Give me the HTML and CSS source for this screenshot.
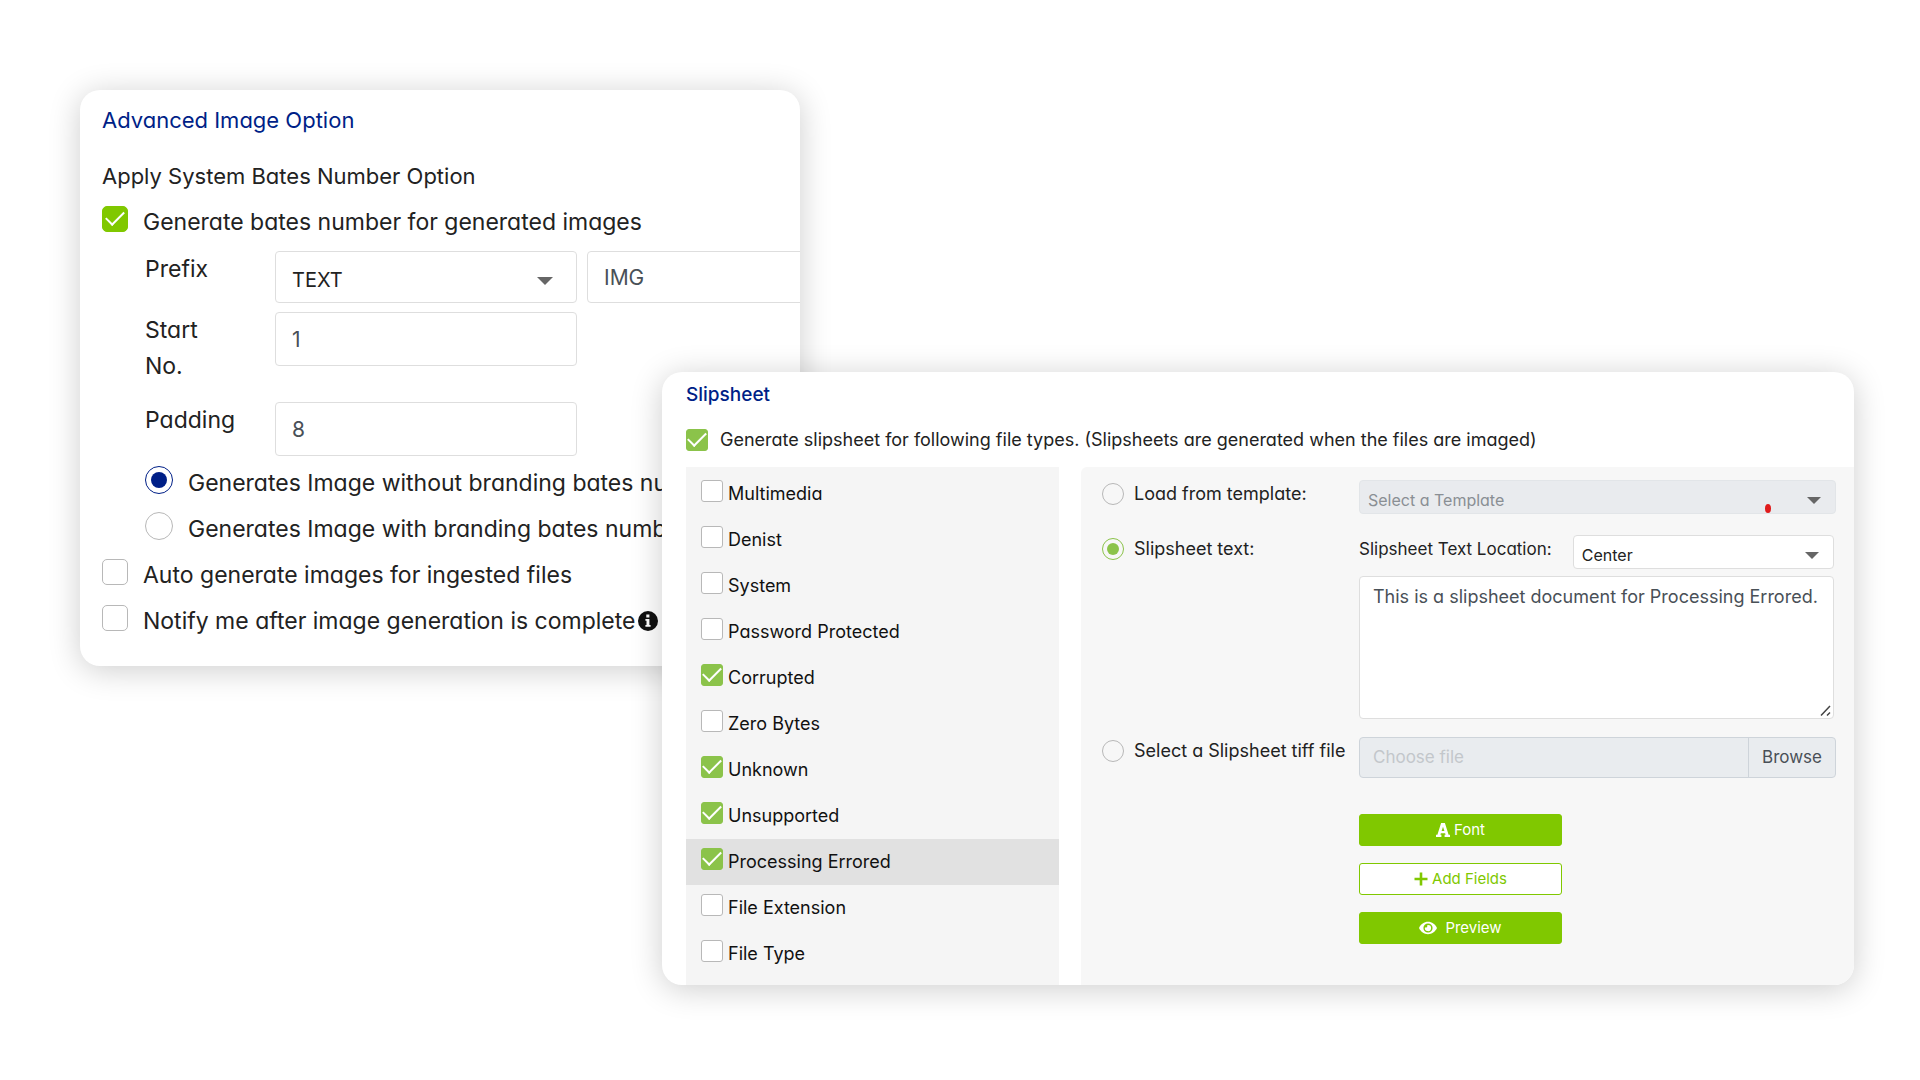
FILE: index.html
```
<!DOCTYPE html>
<html lang="en">
<head>
    <meta charset="UTF-8">
    <meta name="viewport" content="width=device-width, initial-scale=1.0">
    <title>Image Options</title>
    <link rel="stylesheet" href="styles.css">
</head>
<body>
    <main class="stage">
        <section class="card image-card">
            <h2>Advanced Image Option</h2>
            <h3>Apply System Bates Number Option</h3>
            <label class="option"><input type="checkbox" checked> Generate bates number for generated images</label>

            <div class="bates">
                <div class="field">
                    <label for="prefix">Prefix</label>
                    <div class="select-wrap">
                        <select id="prefix"><option>TEXT</option></select>
                    </div>
                    <input class="prefix-text" type="text" value="IMG" aria-label="Prefix text">
                </div>
                <div class="field">
                    <label for="start">Start No.</label>
                    <input id="start" type="text" value="1">
                </div>
                <div class="field padding-field">
                    <label for="padding">Padding</label>
                    <input id="padding" type="text" value="8">
                </div>
                <label class="option"><input type="radio" name="branding" checked> Generates Image without branding bates number</label>
                <label class="option"><input type="radio" name="branding"> Generates Image with branding bates number</label>
            </div>

            <label class="option"><input type="checkbox"> Auto generate images for ingested files</label>
            <label class="option"><input type="checkbox"> Notify me after image generation is complete
                <svg class="info" viewBox="0 0 20 20"><circle cx="10" cy="10" r="10"/><path fill="#fff" d="M8.3 3.6h3.1v2.9H8.3zM7.4 8h4v6h1.2v1.8H7.4V14h1.1V9.8H7.4z"/></svg>
            </label>
        </section>

        <section class="card slip-card">
            <h2>Slipsheet</h2>
            <label class="generate"><input type="checkbox" checked> Generate slipsheet for following file types. (Slipsheets are generated when the files are imaged)</label>

            <div class="slip-body">
                <ul class="types">
                    <li><label><input type="checkbox"> Multimedia</label></li>
                    <li><label><input type="checkbox"> Denist</label></li>
                    <li><label><input type="checkbox"> System</label></li>
                    <li><label><input type="checkbox"> Password Protected</label></li>
                    <li><label><input type="checkbox" checked> Corrupted</label></li>
                    <li><label><input type="checkbox"> Zero Bytes</label></li>
                    <li><label><input type="checkbox" checked> Unknown</label></li>
                    <li><label><input type="checkbox" checked> Unsupported</label></li>
                    <li class="active"><label><input type="checkbox" checked> Processing Errored</label></li>
                    <li><label><input type="checkbox"> File Extension</label></li>
                    <li><label><input type="checkbox"> File Type</label></li>
                </ul>

                <div class="settings">
                    <label class="source"><input type="radio" name="source"> Load from template:</label>
                    <div class="select-wrap small template">
                        <select aria-label="Template" disabled><option>Select a Template</option></select>
                        <span class="dot"></span>
                    </div>

                    <label class="source"><input type="radio" name="source" checked> Slipsheet text:</label>
                    <div class="text-source">
                        <div class="location">
                            <label for="location">Slipsheet Text Location:</label>
                            <div class="select-wrap small">
                                <select id="location"><option>Center</option></select>
                            </div>
                        </div>
                        <textarea aria-label="Slipsheet text">This is a slipsheet document for Processing Errored.</textarea>
                    </div>

                    <label class="source"><input type="radio" name="source"> Select a Slipsheet tiff file</label>
                    <label class="file">
                        <input type="file" disabled>
                        <span class="file-name">Choose file</span>
                        <span class="file-browse">Browse</span>
                    </label>

                    <div class="buttons">
                        <button type="button">
                            <svg width="14" height="14" viewBox="0 0 14 14"><path fill-rule="evenodd" d="M5.1 0h3.8l3.7 11.8H14V14H8.6v-2.2h1l-.5-1.6H4.9l-.5 1.6h1V14H0v-2.2h1.4zM7 3.7L5.6 8h2.8z"/></svg>
                            Font
                        </button>
                        <button type="button" class="outline">
                            <svg width="14" height="14" viewBox="0 0 14 14"><path d="M5.7.5h2.6v5.2h5.2v2.6H8.3v5.2H5.7V8.3H.5V5.7h5.2z"/></svg>
                            Add Fields
                        </button>
                        <button type="button" class="preview">
                            <svg width="18" height="14" viewBox="0 0 18 14"><path fill-rule="evenodd" d="M9 .8c3.900 0 7.100 2.300 9 6.200-1.900 3.900-5.100 6.200-9 6.200S1.900 10.900 0 7C1.900 3.100 5.100.8 9 .8zm0 1.600a4.600 4.600 0 1 0 0 9.200 4.600 4.600 0 0 0 0-9.200z"/><path d="M9 3.900a3.100 3.100 0 1 1-3 2.300 1.600 1.600 0 0 0 2.200-2.200c.3-.1.500-.1.800-.1z"/></svg>
                            Preview
                        </button>
                    </div>
                </div>
            </div>
        </section>
    </main>
</body>
</html>
```
FILE: styles.css
```
* {
    box-sizing: border-box;
}
body {
    font-family: Inter, "Open Sans", sans-serif;
    font-feature-settings: "cv11";
    margin: 0;
    background-color: #fff;
    color: #222;
}
h2, h3 {
    margin: 0;
    font-weight: 400;
}
h2 {
    color: #001f87;
}
input, select, textarea, button {
    font: inherit;
    font-feature-settings: inherit;
    margin: 0;
}

/* the second card overlaps the corner of the first */
.stage {
    display: grid;
    grid-template-columns: 582fr 138fr 1054fr;
    align-items: start;
    padding: 90px 66px 90px 80px;
}
.card {
    grid-row: 1;
    background-color: #fff;
    border-radius: 20px;
    box-shadow: 0 4px 32px rgba(0, 0, 0, 0.2);
    overflow: hidden;
}
.image-card {
    grid-column: 1 / 3;
    padding: 12px 0 22px 22px;
    font-size: 23px;
    line-height: 36px;
    white-space: nowrap;
}
.slip-card {
    grid-column: 2 / 4;
    margin-top: 282px;
    font-size: 18px;
    line-height: 28px;
    z-index: 1;
}

/* tick boxes and radios */
input[type="checkbox"], input[type="radio"] {
    appearance: none;
    flex: none;
    display: grid;
    place-items: center;
    width: 22px;
    height: 22px;
    background-color: #fff;
    border: 1px solid #b8b8b8;
    border-radius: 3px;
}
input[type="radio"] {
    background-color: transparent;
    border-radius: 50%;
}
input[type="checkbox"]:checked {
    background-color: #8bc34a;
    border-color: #8bc34a;
}
input[type="checkbox"]:checked::before {
    content: "";
    width: 16px;
    height: 8px;
    border-left: 2px solid #fff;
    border-bottom: 2px solid #fff;
    transform: translateY(-3px) rotate(-45deg);
}
input[type="radio"]:checked {
    border-color: #8bc34a;
}
input[type="radio"]:checked::before {
    content: "";
    width: 12px;
    height: 12px;
    border-radius: 50%;
    background-color: #8bc34a;
}
.image-card input[type="checkbox"], .image-card input[type="radio"] {
    width: 26px;
    height: 26px;
    margin-bottom: 6px;
    border-radius: 5px;
}
.image-card input[type="radio"] {
    width: 28px;
    height: 28px;
    border-radius: 50%;
}
.image-card input[type="checkbox"]:checked {
    background-color: #80c800;
    border-color: #80c800;
}
.image-card input[type="radio"]:checked {
    border-color: #001f87;
}
.image-card input[type="radio"]:checked::before {
    width: 16px;
    height: 16px;
    background-color: #001f87;
}

/* text boxes and drop-downs */
input[type="text"], select, textarea {
    width: 100%;
    border: 1px solid #dedede;
    border-radius: 4px;
    background-color: #fff;
    color: #495057;
}
input[type="text"] {
    height: 54px;
    padding: 0 16px;
    font-size: 21px;
}
select {
    appearance: none;
    display: block;
    height: 52px;
    padding: 6px 16px 0;
    color: #222;
}
.select-wrap {
    position: relative;
    font-size: 20px;
}
.select-wrap::after {
    content: "";
    position: absolute;
    top: 50%;
    right: 24px;
    border: 8px solid transparent;
    border-top-color: #666;
    border-bottom: 0;
    pointer-events: none;
}
.small {
    font-size: 16px;
}
.small select {
    height: 34px;
    padding: 5px 8px 0;
}
.small::after {
    right: 15px;
    border-width: 7px;
    border-bottom: 0;
}

/* advanced image option */
.image-card h2, .image-card h3 {
    font-size: 22px;
}
.image-card h3 {
    margin: 20px 0 5px;
}
.option {
    display: flex;
    align-items: center;
    gap: 15px;
    height: 46px;
}
.info {
    width: 20px;
    height: 20px;
    margin-left: -12px;
    fill: #111;
}
.bates {
    padding: 6px 0 0 43px;
}
.field {
    display: grid;
    grid-template-columns: 92px 302px 302px;
    column-gap: 38px;
    align-items: start;
    margin-bottom: 9px;
}
.field label {
    white-space: normal;
}
.field .prefix-text {
    height: 52px;
    margin-left: -28px;
}
.padding-field {
    margin: 18px 0 4px;
}

/* slipsheet */
.slip-card h2 {
    padding: 9px 24px 0;
    font-size: 19px;
    font-weight: 500;
}
.generate {
    display: flex;
    align-items: center;
    gap: 12px;
    padding: 17px 24px 13px;
}
.slip-body {
    display: grid;
    grid-template-columns: 373px 1fr;
    gap: 22px;
    padding-left: 24px;
}
.types {
    list-style-type: none;
    margin: 0;
    padding: 4px 0 8px;
    background-color: #f5f5f5;
    color: #111;
}
.types label {
    display: flex;
    align-items: center;
    gap: 5px;
    height: 46px;
    padding-left: 15px;
}
.types input {
    margin-bottom: 7px;
}
.types .active {
    background-color: #e1e1e1;
}
.settings {
    display: grid;
    grid-template-columns: 237px 1fr;
    grid-auto-rows: max-content;
    gap: 18px 20px;
    padding: 13px 18px 0 21px;
    background-color: #f7f7f7;
    border-top-left-radius: 6px;
}
.source {
    display: flex;
    align-items: center;
    align-self: start;
    gap: 10px;
    white-space: nowrap;
}
.template {
    margin-bottom: 3px;
}
.template select {
    background-color: #e9ebee;
    border-color: #e2e5e8;
    color: #8a8f94;
    opacity: 1;
}
.dot {
    position: absolute;
    right: 65px;
    bottom: 1px;
    width: 6px;
    height: 9px;
    border-radius: 50%;
    background-color: #e01b1b;
}
.text-source {
    padding-right: 2px;
}
.location {
    display: flex;
    justify-content: space-between;
    align-items: start;
    margin-bottom: 7px;
    font-size: 17px;
}
.location .select-wrap {
    width: 55%;
}
textarea {
    display: block;
    height: 143px;
    padding: 6px 13px;
    resize: both;
}
textarea::-webkit-resizer {
    background: url("data:image/svg+xml,%3Csvg xmlns='http://www.w3.org/2000/svg' viewBox='0 0 15 15'%3E%3Cpath d='M3 12.500L12 3M9 12.500L12 9.500' stroke='%23444' stroke-width='1.500' fill='none'/%3E%3C/svg%3E") no-repeat center;
}
.file {
    display: flex;
    height: 41px;
    line-height: 38px;
    border: 1px solid #ced4da;
    border-radius: 4px;
    background-color: #e9ecef;
    color: #495057;
    font-size: 17px;
}
.file input {
    position: absolute;
    opacity: 0;
    width: 1px;
}
.file-name {
    flex: 1;
    padding-left: 13px;
    color: #c3c7cb;
}
.file-browse {
    padding: 0 13px;
    border-left: 1px solid #ced4da;
}
.buttons {
    grid-column: 2;
    display: grid;
    gap: 17px;
    width: 203px;
    padding-top: 18px;
}
button {
    display: flex;
    justify-content: center;
    align-items: center;
    gap: 4px;
    height: 32px;
    border: 1px solid #80c800;
    border-radius: 3px;
    background-color: #80c800;
    color: #fff;
    font-size: 15px;
}
button svg {
    fill: currentColor;
}
.outline {
    background-color: #fff;
    color: #80c800;
}
.preview {
    gap: 8px;
}
```
